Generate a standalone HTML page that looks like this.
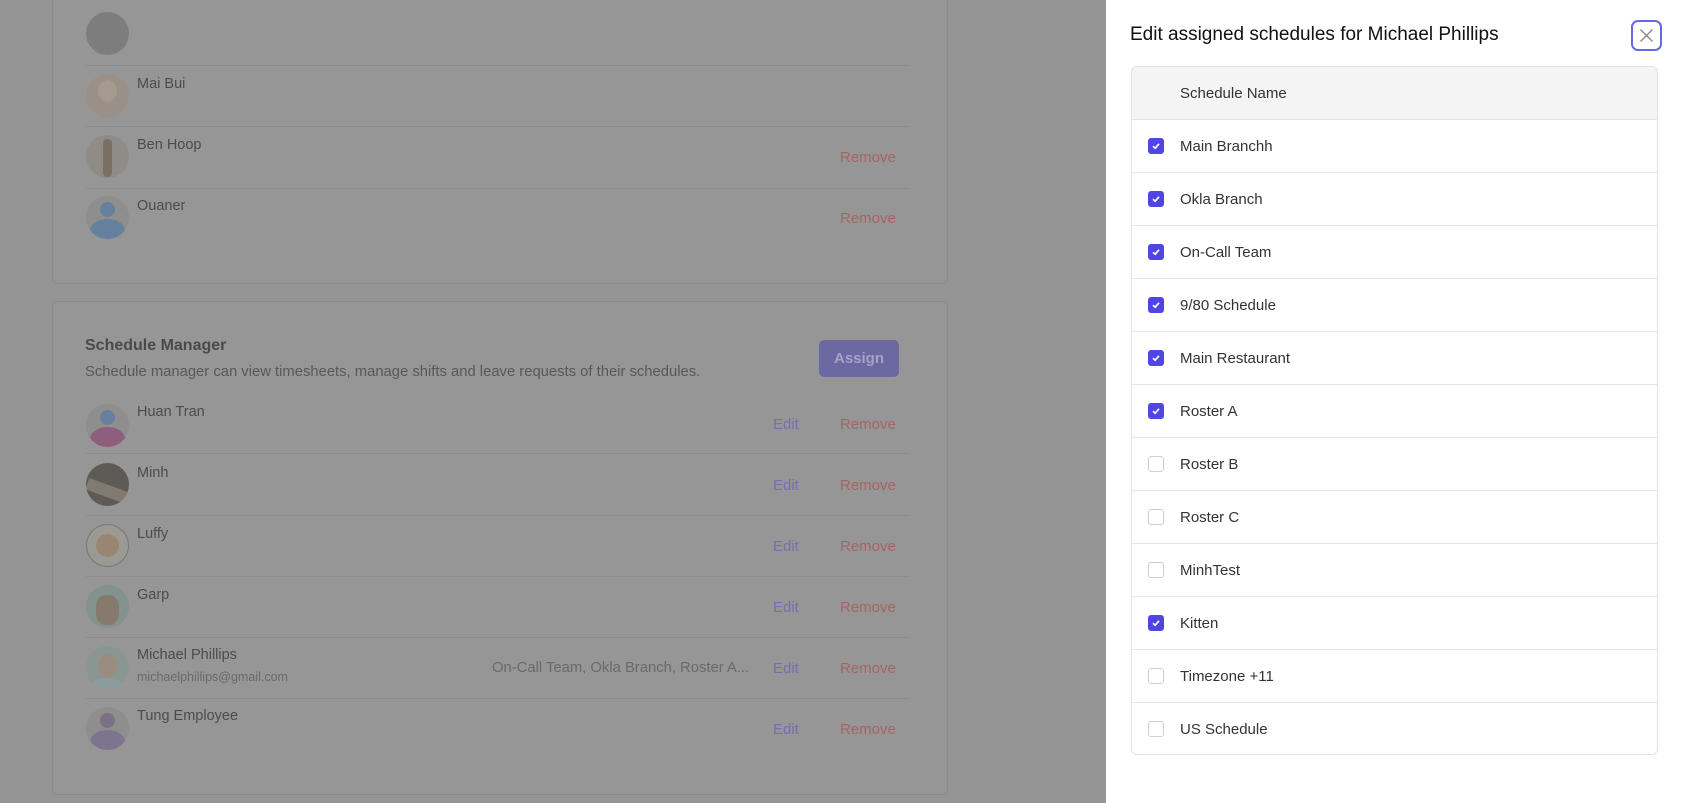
<!DOCTYPE html>
<html><head><meta charset="utf-8">
<style>
*{box-sizing:border-box;margin:0;padding:0}
body{width:1681px;height:803px;overflow:hidden;background:#959595;font-family:"Liberation Sans",sans-serif;position:relative}
.abs{position:absolute}
.card{position:absolute;left:52px;width:896px;border:1px solid #8b8b8b;border-radius:6px;background:#969696}
.name{position:absolute;left:137px;font-size:14.5px;color:#4c4c4c}
.av{position:absolute;left:86px;width:43px;height:43px;border-radius:50%;overflow:hidden;background:#8e8e8e}
.div{position:absolute;left:86px;width:824px;height:1px;background:#8c8c8c}
.edit{position:absolute;left:773px;font-size:15px;color:#7570ad}
.rem{position:absolute;left:840px;font-size:15px;color:#a66464}
.panel{position:absolute;left:1106px;top:0;width:575px;height:803px;background:#fff}
.tbl{position:absolute;left:1131px;top:66px;width:527px;height:689px;border:1px solid #e3e3e3;border-radius:6px;overflow:hidden}
.hd{height:53px;background:#f4f4f4;border-bottom:1px solid #e3e3e3;font-size:15px;color:#333;padding-left:48px;line-height:54px}
.row{height:53px;border-bottom:1px solid #e6e6e6;position:relative;font-size:15px;color:#333;line-height:54px;padding-left:48px}
.row:last-child{border-bottom:none}
.cb{position:absolute;left:16px;top:18px;width:16px;height:16px;border-radius:3px;border:1px solid #cfcfcf;background:#fff}
.cb.on{background:#5046e5;border-color:#5046e5}
.cb.on svg{position:absolute;left:2px;top:2px}
</style></head><body>

<div class="card" style="top:-10px;height:294px"></div>
<div class="av" style="top:12px;background:#7d7d7d"></div>
<div class="div" style="top:65px"></div>
<div class="av" style="top:74px;background:#9a9088"><div class="abs" style="left:12px;top:6px;width:19px;height:22px;border-radius:50%;background:#a59a90"></div></div>
<div class="name" style="top:76px">Mai Bui</div>
<div class="div" style="top:126px"></div>
<div class="av" style="top:135px;background:#8f8c88"><div class="abs" style="left:17px;top:4px;width:9px;height:38px;border-radius:4px;background:#7b6f64"></div></div>
<div class="name" style="top:137px">Ben Hoop</div>
<div class="rem" style="top:149px">Remove</div>
<div class="div" style="top:188px"></div>
<div class="av" style="top:196px"><div class="abs" style="left:14px;top:6px;width:15px;height:15px;border-radius:50%;background:#64809e"></div><div class="abs" style="left:4px;top:23px;width:35px;height:24px;border-radius:50%;background:#64809e"></div></div>
<div class="name" style="top:198px">Ouaner</div>
<div class="rem" style="top:210px">Remove</div>

<div class="card" style="top:301px;height:494px"></div>
<div class="abs" style="left:85px;top:337px;font-size:16px;font-weight:bold;color:#4a4a4a">Schedule Manager</div>
<div class="abs" style="left:85px;top:364px;font-size:14.8px;color:#585858">Schedule manager can view timesheets, manage shifts and leave requests of their schedules.</div>
<div class="abs" style="left:819px;top:340px;width:80px;height:37px;border-radius:5px;background:#6c68a2;color:#a5a2c4;font-size:15px;font-weight:bold;text-align:center;line-height:37px">Assign</div>

<div class="av" style="top:404px"><div class="abs" style="left:14px;top:6px;width:15px;height:15px;border-radius:50%;background:#6780a0"></div><div class="abs" style="left:4px;top:23px;width:35px;height:24px;border-radius:50%;background:#8e5f7c"></div></div>
<div class="name" style="top:404px">Huan Tran</div>
<div class="edit" style="top:416px">Edit</div><div class="rem" style="top:416px">Remove</div>
<div class="div" style="top:453px"></div>

<div class="av" style="top:463px;background:#5e5a55"><div class="abs" style="left:0;top:22px;width:43px;height:12px;background:#807a70;transform:rotate(20deg)"></div></div>
<div class="name" style="top:465px">Minh</div>
<div class="edit" style="top:477px">Edit</div><div class="rem" style="top:477px">Remove</div>
<div class="div" style="top:515px"></div>

<div class="av" style="top:524px;background:#9a9994;border:1px solid #777"><div class="abs" style="left:9px;top:9px;width:23px;height:23px;border-radius:50%;background:#998670"></div></div>
<div class="name" style="top:526px">Luffy</div>
<div class="edit" style="top:538px">Edit</div><div class="rem" style="top:538px">Remove</div>
<div class="div" style="top:576px"></div>

<div class="av" style="top:585px;background:#84928e"><div class="abs" style="left:10px;top:10px;width:23px;height:30px;border-radius:40%;background:#857a6c"></div></div>
<div class="name" style="top:587px">Garp</div>
<div class="edit" style="top:599px">Edit</div><div class="rem" style="top:599px">Remove</div>
<div class="div" style="top:637px"></div>

<div class="av" style="top:646px;background:#8a9692"><div class="abs" style="left:12px;top:8px;width:19px;height:24px;border-radius:50%;background:#9c8c80"></div><div class="abs" style="left:6px;top:32px;width:31px;height:14px;border-radius:50%;background:#8a9c9c"></div></div>
<div class="name" style="top:647px">Michael Phillips</div>
<div class="abs" style="left:137px;top:670px;font-size:12.5px;color:#6a6a6a">michaelphillips@gmail.com</div>
<div class="abs" style="left:492px;top:660px;font-size:14.8px;color:#6a6a6a">On-Call Team, Okla Branch, Roster A...</div>
<div class="edit" style="top:660px">Edit</div><div class="rem" style="top:660px">Remove</div>
<div class="div" style="top:698px"></div>

<div class="av" style="top:707px"><div class="abs" style="left:14px;top:6px;width:15px;height:15px;border-radius:50%;background:#7c7088"></div><div class="abs" style="left:4px;top:23px;width:35px;height:24px;border-radius:50%;background:#7d748e"></div></div>
<div class="name" style="top:708px">Tung Employee</div>
<div class="edit" style="top:721px">Edit</div><div class="rem" style="top:721px">Remove</div>

<div class="panel"></div>
<div class="abs" style="left:1130px;top:24px;font-size:19px;color:#111">Edit assigned schedules for Michael Phillips</div>
<div class="abs" style="left:1631px;top:20px;width:31px;height:31px;border:2px solid #6a67e6;border-radius:7px">
<svg width="27" height="27" viewBox="0 0 27 27" style="position:absolute;left:0;top:0"><path d="M7.5 7.5L19.5 19.5M19.5 7.5L7.5 19.5" stroke="#8a8a8a" stroke-width="1.4"/></svg></div>

<div class="tbl">
<div class="hd">Schedule Name</div>
<div class="row"><span class="cb on"><svg width="10" height="10" viewBox="0 0 10 10"><path d="M2 5.2L4.2 7.2L8 2.8" stroke="#fff" stroke-width="1.7" fill="none"/></svg></span>Main Branchh</div>
<div class="row"><span class="cb on"><svg width="10" height="10" viewBox="0 0 10 10"><path d="M2 5.2L4.2 7.2L8 2.8" stroke="#fff" stroke-width="1.7" fill="none"/></svg></span>Okla Branch</div>
<div class="row"><span class="cb on"><svg width="10" height="10" viewBox="0 0 10 10"><path d="M2 5.2L4.2 7.2L8 2.8" stroke="#fff" stroke-width="1.7" fill="none"/></svg></span>On-Call Team</div>
<div class="row"><span class="cb on"><svg width="10" height="10" viewBox="0 0 10 10"><path d="M2 5.2L4.2 7.2L8 2.8" stroke="#fff" stroke-width="1.7" fill="none"/></svg></span>9/80 Schedule</div>
<div class="row"><span class="cb on"><svg width="10" height="10" viewBox="0 0 10 10"><path d="M2 5.2L4.2 7.2L8 2.8" stroke="#fff" stroke-width="1.7" fill="none"/></svg></span>Main Restaurant</div>
<div class="row"><span class="cb on"><svg width="10" height="10" viewBox="0 0 10 10"><path d="M2 5.2L4.2 7.2L8 2.8" stroke="#fff" stroke-width="1.7" fill="none"/></svg></span>Roster A</div>
<div class="row"><span class="cb"></span>Roster B</div>
<div class="row"><span class="cb"></span>Roster C</div>
<div class="row"><span class="cb"></span>MinhTest</div>
<div class="row"><span class="cb on"><svg width="10" height="10" viewBox="0 0 10 10"><path d="M2 5.2L4.2 7.2L8 2.8" stroke="#fff" stroke-width="1.7" fill="none"/></svg></span>Kitten</div>
<div class="row"><span class="cb"></span>Timezone +11</div>
<div class="row"><span class="cb"></span>US Schedule</div>
</div>
</body></html>
